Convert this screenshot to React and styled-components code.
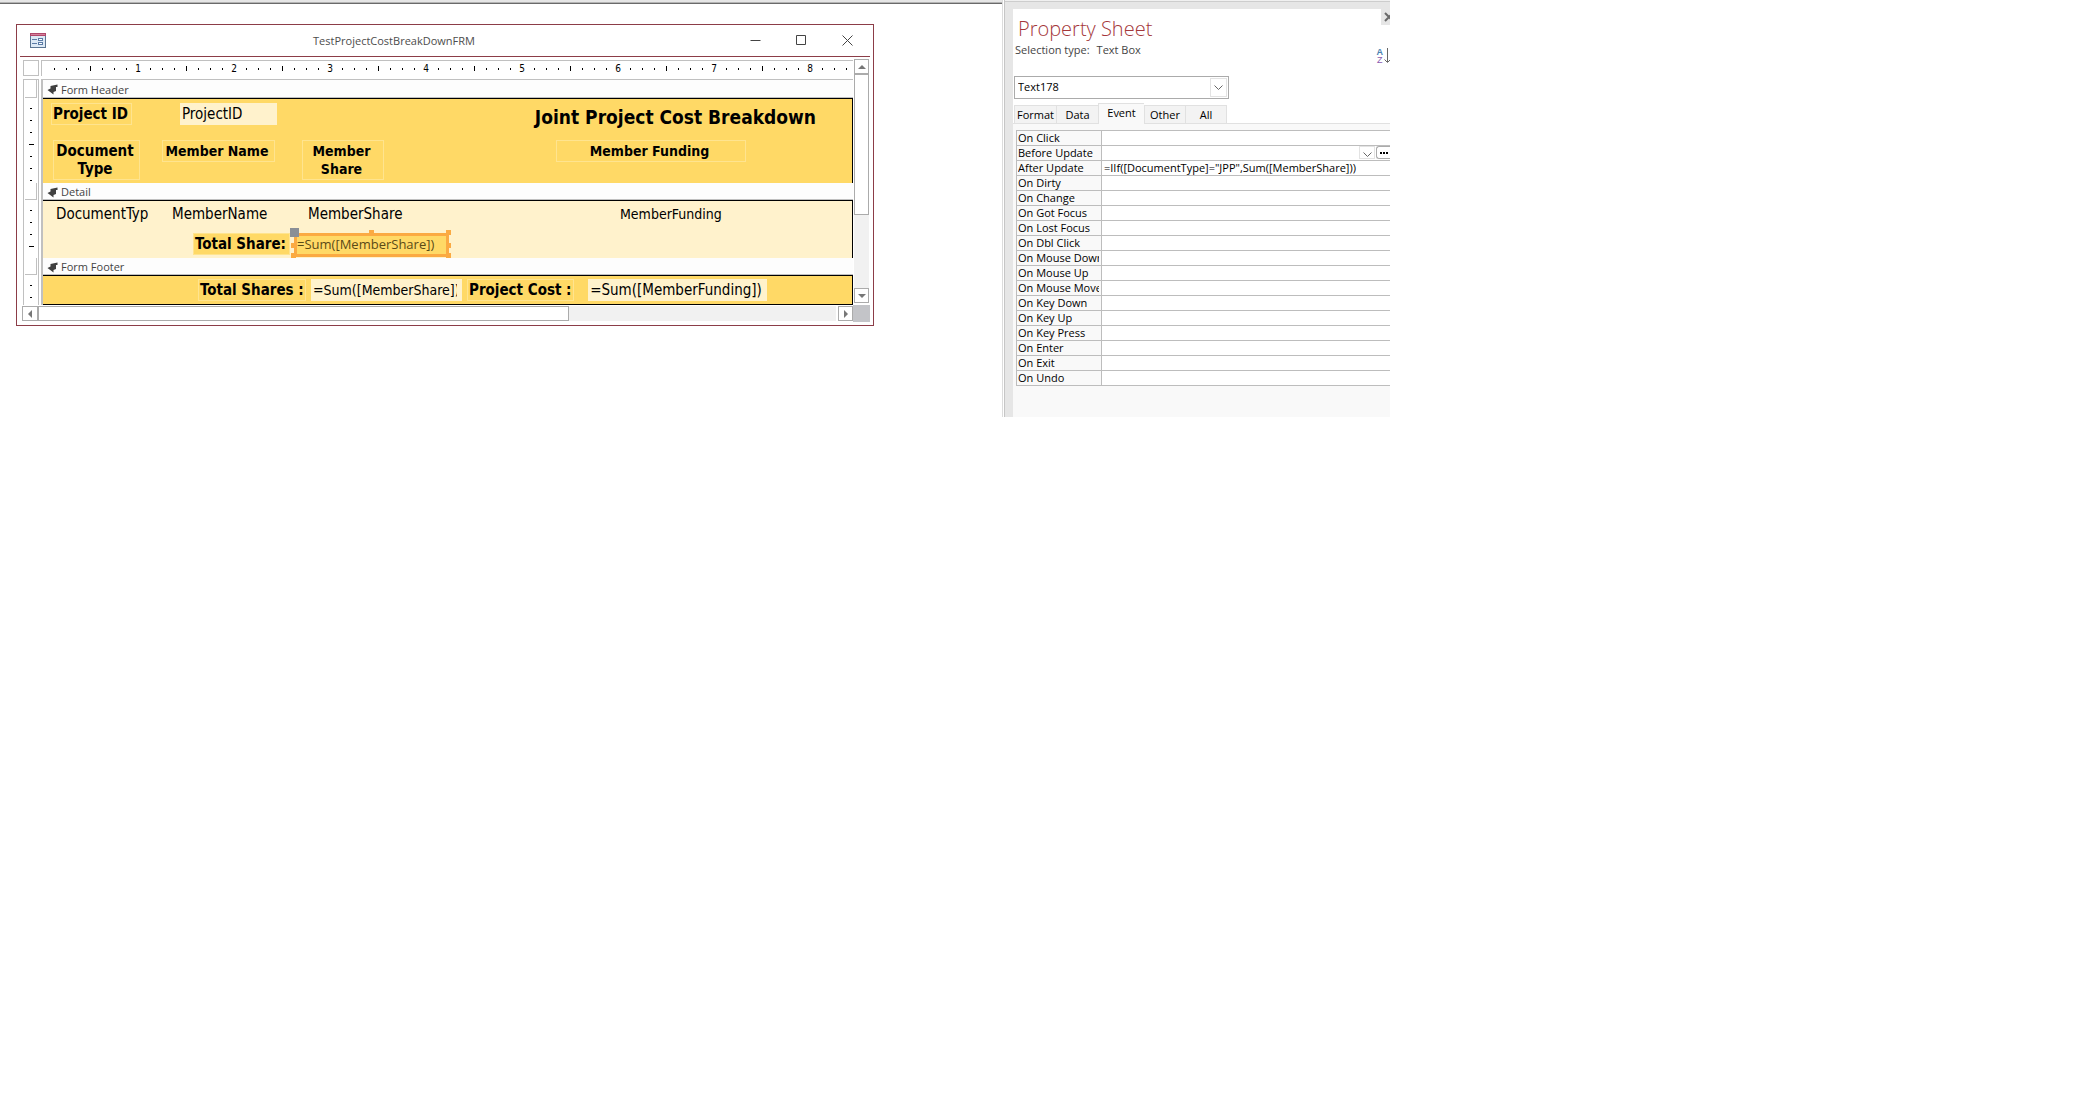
import React, { useState } from 'react';
import styled, { createGlobalStyle, css } from 'styled-components';

const GlobalStyle = createGlobalStyle`
    * {
        box-sizing: border-box;
    }
    body {
        margin: 0;
        background: #fff;
        font: 11px/14px "Open Sans", "Noto Sans", sans-serif;
        color: #444;
    }
    button, input, select {
        margin: 0;
        padding: 0;
        border: 0;
        border-radius: 0;
        background: none;
        font: inherit;
        color: inherit;
        outline: 0;
    }
`;

const Page = styled.div`
    display: grid;
    grid-template-columns: 1002fr 388fr 687fr;
    align-items: start;
`;

const Workspace = styled.main`
    border-top: 2px solid #e6e6e6;
    padding: 22px 128px 0 16px;

    &::before {
        content: "";
        display: block;
        height: 2px;
        margin: -22px -128px 20px -16px;
        background: linear-gradient(#b4b4b4 50%, #6a6a6a 50%);
    }
`;

/* ---------- form window ---------- */

const FormWindow = styled.section`
    border: 1px solid #8c3d48;
    padding: 0 3px 3px;
`;

const TitleBar = styled.header`
    display: flex;
    align-items: center;
    height: 32px;
    padding-left: 10px;
    border-bottom: 1px solid #8c3d48;
`;

const WindowTitle = styled.h1`
    flex: 1;
    margin: 0;
    padding-left: 10px;
    font-size: 11px;
    font-weight: 400;
    text-align: center;
    color: #4d4d4d;
`;

const WindowButton = styled.button`
    display: flex;
    align-items: center;
    justify-content: center;
    width: 46px;
    height: 30px;
`;

const DesignArea = styled.div`
    display: grid;
    grid-template-columns: minmax(0, 1fr) 15px;
    padding: 2px 1px 0 2px;
`;

const Canvas = styled.div`
    padding: 1px 0 0 1px;
`;

const RulerRow = styled.div`
    display: grid;
    grid-template-columns: 16px minmax(0, 1fr);
    gap: 2px;
    height: 19px;
    padding-right: 1px;
`;

const RulerCorner = styled.div`
    height: 16px;
    border: 1px solid #c0c0c0;
`;

const Ruler = styled.div`
    display: flex;
    height: 16px;
    padding-left: 6px;
    border: 1px solid #c0c0c0;
    border-width: 1px 0 0 1px;
    overflow: hidden;
`;

const Tick = styled.span`
    display: flex;
    flex: none;
    align-items: center;
    justify-content: center;
    width: 12px;
    font: 10px/15px "DejaVu Sans Condensed", "DejaVu Sans", sans-serif;
    color: #000;

    &::before {
        content: "";
        display: ${props => props.$kind === 'number' ? 'none' : 'block'};
        width: 1px;
        height: ${props => props.$kind === 'half' ? 5 : 2}px;
        background: #000;
    }
`;

const SideTick = styled.span`
    display: flex;
    flex: none;
    align-items: center;
    justify-content: center;
    height: 12px;

    &::before {
        content: "";
        width: ${props => props.$half ? 5 : 2}px;
        height: 1px;
        background: #000;
    }
`;

const Sections = styled.div`
    padding-right: 1px;
`;

const SectionRow = styled.div`
    display: grid;
    grid-template-columns: 16px minmax(0, 1fr);
    gap: 2px;
`;

/* the ruler never makes a section taller, extra ticks are cut off */
const SideRuler = styled.div`
    contain: size;
    display: flex;
    flex-direction: column;
    border: 1px solid #c0c0c0;
    border-width: ${props => props.$first ? '1px 1px 0' : '0 1px'};
    overflow: hidden;
`;

const SectionSelector = styled.button`
    flex: none;
    width: 12px;
    height: ${props => props.$first ? 18 : 17}px;
    margin: 0 0 4px 1px;
    border: 1px solid #c0c0c0;
    border-width: 0 1px 1px 0;
`;

const SectionBody = styled.div`
    border-left: 2px solid #c0c0c0;
`;

const SectionBar = styled.div`
    display: flex;
    align-items: center;
    gap: 3px;
    height: ${props => props.$first ? 19 : 17}px;
    padding: 2px 0 0 4px;
    background: #fdfdfd;
    border-top: ${props => props.$first ? '1px solid #c0c0c0' : '0'};
    border-bottom: 1px solid #c0c0c0;
`;

const Surface = styled.div`
    height: ${props => props.$height}px;
    background: ${props => props.$light ? '#fff2cc' : '#ffd966'};
    border: 1px solid #000;
    border-width: ${props => props.$last ? '1px 1px 1px 0' : '1px 1px 0 0'};
    font: 15px/18px "DejaVu Sans Condensed", Tahoma, "DejaVu Sans", sans-serif;
    color: #000;
    overflow: hidden;
`;

const ControlRow = styled.div`
    display: grid;
    align-items: start;
`;

const ProjectRow = styled(ControlRow)`
    grid-template-columns: 81px 97px minmax(0, 1fr);
    column-gap: 48px;
    padding: 4px 36px 0 8px;
`;

const ColumnHeads = styled(ControlRow)`
    grid-template-columns: 87px 113px 82px 190px;
    column-gap: 22px;
    padding: 9px 0 0 10px;

    > :nth-child(3) {
        margin-left: 5px;
        margin-right: -5px;
    }
    > :nth-child(4) {
        margin-left: 155px;
        margin-right: -155px;
    }
`;

const DetailFields = styled(ControlRow)`
    grid-template-columns: 100px 120px 296px 136px;
    column-gap: 16px;
    padding: 2px 0 0 11px;
`;

const ShareRow = styled(ControlRow)`
    grid-template-columns: 97px 155px;
    column-gap: 4px;
    padding: 8px 0 0 150px;
`;

const TotalsRow = styled(ControlRow)`
    grid-template-columns: 108px 151px 107px 179px;
    column-gap: 5px;
    padding: 3px 0 0 155px;

    > :nth-child(4) {
        margin-left: 9px;
        margin-right: -9px;
    }
`;

const ControlLabel = styled.label`
    display: block;
    min-height: 22px;
    padding: ${props => props.$center ? '1px 4px 1px 1px' : '1px'};
    border: 1px solid #ffe48f;
    font-weight: 700;
    font-size: ${props => props.$small ? 14 : 15}px;
    text-align: ${props => props.$center ? 'center' : 'left'};
    white-space: ${props => props.$center ? 'normal' : 'nowrap'};
    ${props => props.$filled && css`
        background: #ffd966;
    `}
`;

const FormTitle = styled.h2`
    margin: 0;
    font-size: 19px;
    line-height: 28px;
    text-align: right;
`;

const BoundBox = styled.input`
    width: 100%;
    height: 22px;
    padding: 0 5px 0 2px;
    background: #fff2cc;
    line-height: 22px;
    font-size: ${props => props.$small ? 14 : 15}px;
    text-align: ${props => props.$center ? 'center' : 'left'};
`;

const Selection = styled.div`
    position: relative;
    height: 24px;
    background: #ffd966;
    border: 3px solid #fbaa42;
`;

const SelectedBox = styled.input`
    display: block;
    width: 100%;
    height: 16px;
    font: 13px/16px "Open Sans", "Noto Sans", sans-serif;
    color: #5b4a17;
`;

const Handle = styled.span`
    position: absolute;
    width: 5px;
    height: 5px;
    background: #fbaa42;
    left: ${props => ({ left: '-6px', center: '72px' })[props.$x] || 'auto'};
    right: ${props => props.$x === 'right' ? '-5px' : 'auto'};
    top: ${props => ({ top: '-6px', middle: '7px' })[props.$y] || 'auto'};
    bottom: ${props => props.$y === 'bottom' ? '-4px' : 'auto'};
`;

const MoveHandle = styled.span`
    position: absolute;
    left: -7px;
    top: -8px;
    width: 9px;
    height: 9px;
    background: #8a8f96;
`;

const ScrollColumn = styled.div`
    display: flex;
    flex-direction: column;
    background: #f1f1f1;
    margin-bottom: 2px;

    > :last-child {
        margin-top: auto;
    }
`;

const ScrollRow = styled.div`
    display: grid;
    grid-template-columns: 16px minmax(0, 532fr) minmax(0, 269fr) 15px 17px;
    align-items: center;
    height: 17px;
    padding-left: 2px;
`;

const ArrowButton = styled.button`
    display: flex;
    flex: none;
    align-items: center;
    justify-content: center;
    height: 15px;
    border: 1px solid #ababab;
    background: #fff;
`;

const Thumb = styled.div`
    height: ${props => props.$vertical ? 141 : 15}px;
    border: 1px solid #ababab;
    background: #fff;
`;

const Track = styled.div`
    height: 15px;
    margin-right: 2px;
    background: #f1f1f1;
`;

const Grip = styled.div`
    height: 17px;
    background: #c3c4c8;
`;

/* ---------- property sheet ---------- */

const Sheet = styled.aside`
    min-height: 417px;
    border-left: 1px solid #dcdcdc;
    padding-left: 1px;
    display: flex;
`;

const SheetFrame = styled.div`
    display: flex;
    flex-direction: column;
    flex: 1;
    min-width: 0;
    border-left: 1px solid #c6c6c6;
    background: #e6e6e6;
    padding: 6px 0 0 8px;

    &::before {
        content: "";
        height: 3px;
        margin: -6px 0 6px -8px;
        background: linear-gradient(#f0f0f0 34%, #cdcdcd 34%, #cdcdcd 67%, #e6e6e6 67%);
    }
`;

const SheetContent = styled.div`
    display: flex;
    flex-direction: column;
    flex: 1;
    min-width: 0;
    background: #fff;
`;

const SheetTop = styled.div`
    display: flex;
    justify-content: space-between;
    height: 67px;
`;

const SheetTitle = styled.h2`
    margin: 0;
    padding: 6px 0 0 5px;
    font-size: 20px;
    line-height: 28px;
    font-weight: 300;
    color: #a4373a;
`;

const SelectionType = styled.p`
    display: flex;
    gap: 7px;
    margin: 0;
    padding: 0 0 0 2px;
`;

const SheetTools = styled.div`
    display: flex;
    flex-direction: column;
    align-items: flex-end;
    gap: 23px;
`;

const CloseButton = styled.button`
    display: block;
    width: 9px;
    height: 16px;
    background: #e6e6e6;
    overflow: hidden;

    svg {
        display: block;
    }
`;

const SortButton = styled.button`
    display: flex;
    gap: 1px;
`;

const SortLetters = styled.span`
    display: flex;
    flex-direction: column;
    font: 700 9px/8px "Liberation Sans", sans-serif;
    color: #4a7fb0;

    span:last-child {
        font-weight: 400;
        color: #8a5ab0;
    }
`;

const Combo = styled.div`
    position: relative;
    display: flex;
    width: 215px;
    height: 23px;
    margin-left: 1px;
    border: 1px solid #ababab;
    color: #000;

    select {
        flex: 1;
        appearance: none;
        padding: 0 0 2px 3px;
    }
`;

const ComboArrow = styled.span`
    position: absolute;
    top: 1px;
    right: 1px;
    display: flex;
    align-items: center;
    justify-content: center;
    width: 17px;
    height: 19px;
    border: 1px solid #e3e3e3;
    background: #fff;
    pointer-events: none;
`;

const Tabs = styled.div`
    display: flex;
    align-items: flex-end;
    height: 24px;
    padding-left: 1px;
`;

const Tab = styled.button`
    width: ${props => props.$width}px;
    height: 18px;
    border: 1px solid #e1e1e1;
    border-width: 1px 0 0 1px;
    background: #f3f3f3;
    color: #000;

    &:last-child {
        border-right-width: 1px;
    }

    ${props => props.$active && css`
        height: 21px;
        margin-bottom: -1px;
        padding-bottom: 3px;
        background: #f9f9f9;
        position: relative;
    `}
`;

const Events = styled.div`
    flex: 1;
    padding: 6px 0 0 3px;
    background: #f9f9f9;
    border-top: 1px solid #e1e1e1;
`;

const EventTable = styled.table`
    width: 100%;
    table-layout: fixed;
    border-collapse: collapse;
    color: #000;

    th, td {
        height: 15px;
        padding: 0;
        border: 1px solid #bdbdbd;
        line-height: 14px;
    }
    th {
        width: 85px;
        padding: 0 2px 0 1px;
        font-weight: 400;
        text-align: left;
    }
    td {
        background: #fff;
        border-right: 0;
    }
`;

const EventName = styled.div`
    height: 14px;
    white-space: nowrap;
    overflow: hidden;
`;

const Cell = styled.div`
    display: flex;
    height: 14px;

    input {
        flex: 1;
        min-width: 0;
        padding-left: 2px;
    }
`;

const CellButton = styled.button`
    display: flex;
    align-items: ${props => props.$builder ? 'center' : 'flex-end'};
    justify-content: center;
    width: ${props => props.$builder ? 14 : 16}px;
    height: 13px;
    margin-left: ${props => props.$builder ? 1 : 0}px;
    border: 1px solid ${props => props.$builder ? '#ababab' : '#e3e3e3'};
    border-radius: ${props => props.$builder ? '3px 0 0 3px' : 0};
    ${props => props.$builder && 'border-right: 0;'}
`;

const FormIcon = () => (
    <svg width="16" height="15" viewBox="0 0 16 15" shapeRendering="crispEdges" aria-hidden="true">
        <rect x="0" y="0" width="16" height="15" fill="#5b7593" />
        <rect x="1" y="3" width="14" height="11" fill="#dde9f5" />
        <rect x="0" y="0" width="16" height="3" fill="#b0476b" />
        <rect x="1" y="1" width="14" height="1" fill="#d4809a" />
        <path d="M2 6h5v1H2zM2 10h5v1H2z" fill="#5b7ba6" />
        <path d="M8 5h5v3H8zM8 9h5v3H8z" fill="#5b7ba6" />
        <path d="M9 6h3v1H9zM9 10h3v1H9z" fill="#fff" />
    </svg>
);

const SectionArrow = () => (
    <svg width="11" height="11" viewBox="0 0 11 11" aria-hidden="true">
        <path d="M3.500 2L10.500 .5V3H9V7L6.500 8V10.500L.5 6L3.500 4.500Z" fill="#404040" />
    </svg>
);

const Chevron = () => (
    <svg width="9" height="6" viewBox="0 0 9 6" fill="none" stroke="#666" aria-hidden="true">
        <path d="M.5 .5l4 4 4-4" />
    </svg>
);

const arrowPaths = {
    up: 'M0 6L4 2L8 6Z',
    down: 'M0 2L4 6L8 2Z',
    left: 'M6 0L2 4L6 8Z',
    right: 'M2 0L6 4L2 8Z'
};

const ScrollArrow = ({ direction }) => (
    <ArrowButton type="button" aria-label={`Scroll ${direction}`}>
        <svg width="8" height="8" viewBox="0 0 8 8">
            <path d={arrowPaths[direction]} fill="#777" />
        </svg>
    </ArrowButton>
);

const range = count => Array.from({ length: count }, (_, i) => i + 1);

const tickKind = n => {
    if (n % 8 === 0) return 'number';
    return n % 4 === 0 ? 'half' : 'dot';
};

const Section = ({ name, height, ticks, first, last, light, children }) => (
    <SectionRow>
        <SideRuler $first={first}>
            <SectionSelector type="button" aria-label={`Select ${name}`} $first={first} />
            {range(ticks).map(n => <SideTick key={n} $half={n % 4 === 0} />)}
        </SideRuler>
        <SectionBody>
            <SectionBar $first={first}>
                <SectionArrow />
                {name}
            </SectionBar>
            <Surface $height={height} $light={light} $last={last}>
                {children}
            </Surface>
        </SectionBody>
    </SectionRow>
);

const FormDesigner = () => (
    <FormWindow>
        <TitleBar>
            <FormIcon />
            <WindowTitle>TestProjectCostBreakDownFRM</WindowTitle>
            <WindowButton type="button" aria-label="Minimize">
                <svg width="11" height="11" stroke="#444"><path d="M.5 5.500h10" /></svg>
            </WindowButton>
            <WindowButton type="button" aria-label="Maximize">
                <svg width="11" height="11" stroke="#444" fill="none"><path d="M.5 .5h9v9h-9z" /></svg>
            </WindowButton>
            <WindowButton type="button" aria-label="Close">
                <svg width="11" height="11" stroke="#444"><path d="M.5 .5l10 10M10.500 .5l-10 10" /></svg>
            </WindowButton>
        </TitleBar>
        <DesignArea>
            <Canvas>
                <RulerRow>
                    <RulerCorner />
                    <Ruler>
                        {range(67).map(n => (
                            <Tick key={n} $kind={tickKind(n)}>
                                {n % 8 === 0 && n / 8}
                            </Tick>
                        ))}
                    </Ruler>
                </RulerRow>
                <Sections>
                    <Section name="Form Header" height={85} ticks={7} first>
                        <ProjectRow>
                            <ControlLabel htmlFor="project-id">Project ID</ControlLabel>
                            <BoundBox id="project-id" defaultValue="ProjectID" />
                            <FormTitle>Joint Project Cost Breakdown</FormTitle>
                        </ProjectRow>
                        <ColumnHeads>
                            <ControlLabel htmlFor="document-type" $center>Document Type</ControlLabel>
                            <ControlLabel htmlFor="member-name" $small $center>Member Name</ControlLabel>
                            <ControlLabel htmlFor="member-share" $small $center>Member Share</ControlLabel>
                            <ControlLabel htmlFor="member-funding" $small $center>Member Funding</ControlLabel>
                        </ColumnHeads>
                    </Section>
                    <Section name="Detail" height={58} ticks={4} light>
                        <DetailFields>
                            <BoundBox id="document-type" defaultValue="DocumentTyp" />
                            <BoundBox id="member-name" defaultValue="MemberName" />
                            <BoundBox id="member-share" defaultValue="MemberShare" />
                            <BoundBox id="member-funding" $small defaultValue="MemberFunding" />
                        </DetailFields>
                        <ShareRow>
                            <ControlLabel htmlFor="total-share" $filled>Total Share:</ControlLabel>
                            <Selection>
                                <SelectedBox id="total-share" defaultValue="=Sum([MemberShare])" />
                                <Handle $x="center" $y="top" />
                                <Handle $x="right" $y="top" />
                                <Handle $x="left" $y="middle" />
                                <Handle $x="right" $y="middle" />
                                <Handle $x="left" $y="bottom" />
                                <Handle $x="right" $y="bottom" />
                                <MoveHandle />
                            </Selection>
                        </ShareRow>
                    </Section>
                    <Section name="Form Footer" height={30} ticks={2} last>
                        <TotalsRow>
                            <ControlLabel htmlFor="total-shares">Total Shares :</ControlLabel>
                            <BoundBox id="total-shares" $small defaultValue="=Sum([MemberShare])" />
                            <ControlLabel htmlFor="project-cost">Project Cost :</ControlLabel>
                            <BoundBox id="project-cost" $center defaultValue="=Sum([MemberFunding])" />
                        </TotalsRow>
                    </Section>
                </Sections>
            </Canvas>
            <ScrollColumn>
                <ScrollArrow direction="up" />
                <Thumb $vertical />
                <ScrollArrow direction="down" />
            </ScrollColumn>
        </DesignArea>
        <ScrollRow>
            <ScrollArrow direction="left" />
            <Thumb />
            <Track />
            <ScrollArrow direction="right" />
            <Grip />
        </ScrollRow>
    </FormWindow>
);

const tabs = [
    { name: 'Format', width: 42 },
    { name: 'Data', width: 42 },
    { name: 'Event', width: 46 },
    { name: 'Other', width: 41 },
    { name: 'All', width: 42 }
];

const events = [
    'On Click', 'Before Update', 'After Update', 'On Dirty', 'On Change',
    'On Got Focus', 'On Lost Focus', 'On Dbl Click', 'On Mouse Down',
    'On Mouse Up', 'On Mouse Move', 'On Key Down', 'On Key Up',
    'On Key Press', 'On Enter', 'On Exit', 'On Undo'
];

const values = {
    'After Update': '=IIf([DocumentType]="JPP",Sum([MemberShare]))'
};

const PropertySheet = () => {
    const [active, setActive] = useState('Event');

    return (
        <Sheet>
            <SheetFrame>
                <SheetContent>
                    <SheetTop>
                        <div>
                            <SheetTitle>Property Sheet</SheetTitle>
                            <SelectionType>
                                <span>Selection type:</span>
                                <span>Text Box</span>
                            </SelectionType>
                        </div>
                        <SheetTools>
                            <CloseButton type="button" aria-label="Close property sheet">
                                <svg width="12" height="16" fill="none" stroke="#6a6a6a" strokeWidth="2">
                                    <path d="M4 4l8 8M12 4l-8 8" />
                                </svg>
                            </CloseButton>
                            <SortButton type="button" aria-label="Sort">
                                <SortLetters>
                                    <span>A</span>
                                    <span>Z</span>
                                </SortLetters>
                                <svg width="6" height="16" fill="none" stroke="#666">
                                    <path d="M3.500 0v14M.5 11.500l3 3 3-3" />
                                </svg>
                            </SortButton>
                        </SheetTools>
                    </SheetTop>
                    <Combo>
                        <select aria-label="Selected control" defaultValue="Text178">
                            <option>Text178</option>
                        </select>
                        <ComboArrow><Chevron /></ComboArrow>
                    </Combo>
                    <Tabs role="tablist">
                        {tabs.map(tab => (
                            <Tab
                                key={tab.name}
                                type="button"
                                role="tab"
                                aria-selected={tab.name === active}
                                $active={tab.name === active}
                                $width={tab.width}
                                onClick={() => setActive(tab.name)}
                            >
                                {tab.name}
                            </Tab>
                        ))}
                    </Tabs>
                    <Events>
                        <EventTable>
                            <tbody>
                                {events.map(name => (
                                    <tr key={name}>
                                        <th scope="row"><EventName>{name}</EventName></th>
                                        <td>
                                            <Cell>
                                                <input aria-label={name} defaultValue={values[name]} />
                                                {name === 'Before Update' && (
                                                    <>
                                                        <CellButton type="button" aria-label="Choose a procedure">
                                                            <Chevron />
                                                        </CellButton>
                                                        <CellButton type="button" aria-label="Open builder" $builder>
                                                            <svg width="8" height="2"><path d="M0 0h2v2H0zM3 0h2v2H3zM6 0h2v2H6z" /></svg>
                                                        </CellButton>
                                                    </>
                                                )}
                                            </Cell>
                                        </td>
                                    </tr>
                                ))}
                            </tbody>
                        </EventTable>
                    </Events>
                </SheetContent>
            </SheetFrame>
        </Sheet>
    );
};

const App = () => (
    <>
        <GlobalStyle />
        <Page>
            <Workspace>
                <FormDesigner />
            </Workspace>
            <PropertySheet />
        </Page>
    </>
);

export default App;
